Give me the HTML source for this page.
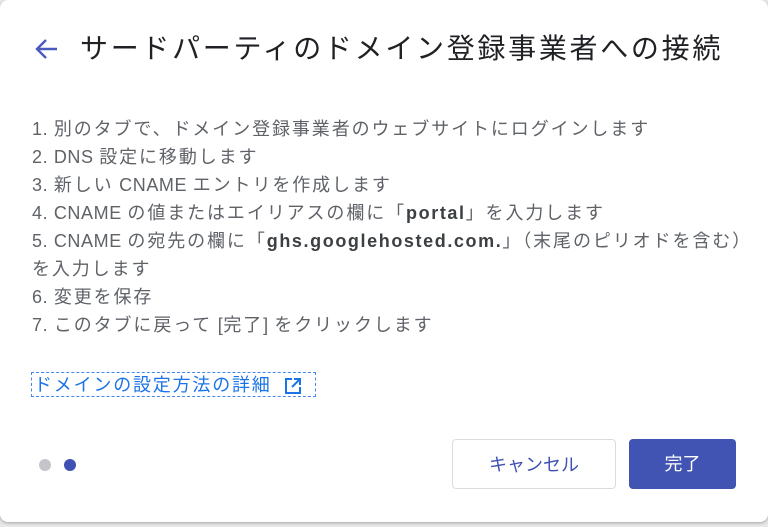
<!DOCTYPE html>
<html><head><meta charset="utf-8"><style>
html,body{margin:0;padding:0;width:768px;height:527px;overflow:hidden;background:#e8e8e8;font-family:"Liberation Sans","Noto Sans CJK JP",sans-serif}
.d{position:absolute;left:0;top:0;width:768px;height:522px;background:#fff;border-radius:8px;box-shadow:0 1px 3px rgba(0,0,0,.3)}
.t{position:absolute;left:80px;top:29px;font-size:28px;letter-spacing:2.7px;color:#202124;white-space:nowrap;line-height:40px}
.b{position:absolute;left:32px;top:115px;font-size:18px;letter-spacing:1.9px;color:#5f6368;line-height:28px;white-space:nowrap}
.b i{font-style:normal;letter-spacing:0.6px}
.b b{color:#3c4043;letter-spacing:1.6px}
.l{position:absolute;left:31px;top:372px;width:285px;height:25px;border:1px dashed #4a86e8;font-size:18px;letter-spacing:1.8px;color:#1a73e8;line-height:24px;padding-left:2px;box-sizing:border-box;white-space:nowrap}
.btn{position:absolute;top:439px;height:50px;border-radius:4px;box-sizing:border-box;font-size:18px;line-height:50px;text-align:center}
</style></head><body>
<div class="d">
<svg style="position:absolute;left:33px;top:37px" width="26" height="24" viewBox="0 0 26 24"><path d="M24 12H4M13 3L4 12l9 9" fill="none" stroke="#4a5bc0" stroke-width="2.4"/></svg>
<div class="t">サードパーティのドメイン登録事業者への接続</div>
<div class="b"><i>1. </i>別のタブで、ドメイン登録事業者のウェブサイトにログインします<br><i>2. DNS </i>設定に移動します<br><i>3. </i>新しい<i> CNAME </i>エントリを作成します<br><i>4. CNAME </i>の値またはエイリアスの欄に「<b>portal</b>」を入力します<br><i>5. CNAME </i>の宛先の欄に「<b>ghs.googlehosted.com.</b>」（末尾のピリオドを含む）<br>を入力します<br><i>6. </i>変更を保存<br><i>7. </i>このタブに戻って<i> [</i>完了<i>] </i>をクリックします</div>
<div class="l">ドメインの設定方法の詳細
<svg style="position:absolute;left:251px;top:3px" width="20" height="20" viewBox="0 0 20 20"><path d="M9 3H3v14h14v-6M11 3h6v6M17 3l-8 8" fill="none" stroke="#1a73e8" stroke-width="2"/></svg></div>
<div style="position:absolute;left:39px;top:459px;width:12px;height:12px;border-radius:50%;background:#c3c5cb"></div>
<div style="position:absolute;left:64px;top:459px;width:12px;height:12px;border-radius:50%;background:#3f51b5"></div>
<div class="btn" style="left:452px;width:164px;border:1px solid #dadce0;color:#3f51b5;background:#fff">キャンセル</div>
<div class="btn" style="left:629px;width:107px;background:#4154b3;color:#fff">完了</div>
</div>
</body></html>
